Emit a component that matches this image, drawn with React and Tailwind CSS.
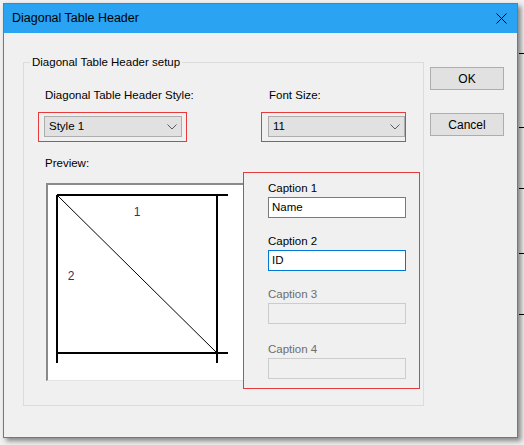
import React from "react";

const font = { fontFamily: '"Liberation Sans", Arial, sans-serif' };

const Chevron = () => (
  <svg width="10" height="6" viewBox="0 0 10 6" className="shrink-0">
    <path d="M0.5 0.5 L5 5 L9.5 0.5" fill="none" stroke="#5a5a5a" strokeWidth="1" />
  </svg>
);

const Combo = ({ value, width }) => (
  <div
    className={`h-[21px] ${width} bg-[#e1e1e1] border border-[#adadad] flex items-center justify-between pl-[4px] pr-[4px] text-[11.5px] text-black`}
  >
    <span>{value}</span>
    <Chevron />
  </div>
);

const Caption = ({ label, value, state, className }) => {
  const box =
    state === "focus"
      ? "bg-white border-[#0078d7]"
      : state === "disabled"
      ? "bg-[#f0f0f0] border-[#cccccc]"
      : "bg-white border-[#7a7a7a]";
  return (
    <div className={className}>
      <div className={`leading-[16px] text-[11.5px] ${state === "disabled" ? "text-[#6d6d6d]" : "text-black"}`}>
        {label}
      </div>
      <div className={`mt-[1px] h-[21px] w-[138px] border ${box} flex items-center pl-[3px] text-[11.5px] text-black`}>
        {value}
      </div>
    </div>
  );
};

const Preview = () => (
  <svg width="200" height="194" viewBox="0 0 200 194" className="block">
    <g stroke="#000" strokeWidth="1.6" shapeRendering="crispEdges">
      <line x1="9" y1="10" x2="180" y2="10" />
      <line x1="9" y1="10" x2="9" y2="178" />
      <line x1="169" y1="10" x2="169" y2="178" />
      <line x1="9" y1="168" x2="180" y2="168" />
    </g>
    <line x1="9" y1="10" x2="169" y2="168" stroke="#000" strokeWidth="1" />
    <text x="89" y="31" fontSize="12" fill="#1f3a6b" textAnchor="middle" style={font}>1</text>
    <text x="23" y="95" fontSize="12" fill="#1f3a6b" textAnchor="middle" style={font}>2</text>
  </svg>
);

const Btn = ({ children, className }) => (
  <button
    className={`w-[74px] h-[23px] bg-[#e1e1e1] border border-[#adadad] text-[12px] text-black flex items-center justify-center ${className || ""}`}
  >
    {children}
  </button>
);

export default function App() {
  const ticks = [53, 127, 188, 253, 314];
  return (
    <div className="relative w-[524px] h-[445px] bg-[#f0f0f0] overflow-hidden" style={font}>
      {ticks.map((t) => (
        <div key={t} className="absolute left-[519px] w-[5px] h-[1px] bg-black" style={{ top: t }} />
      ))}
      <div className="relative ml-[3px] pt-[3px]">
        <div className="w-[515px] h-[435px] border border-[#1c8fe6] bg-[#f0f0f0] shadow-[3px_3px_5px_rgba(0,0,0,0.45)] flex flex-col">
          {/* title bar */}
          <div className="h-[29px] bg-[#29a3f2] flex items-center justify-between pl-[8px] pr-[10px]">
            <span className="text-[12.5px] text-black">Diagonal Table Header</span>
            <svg width="11" height="11" viewBox="0 0 11 11">
              <path d="M0.5 0.5 L10.5 10.5 M10.5 0.5 L0.5 10.5" stroke="#000" strokeWidth="1" />
            </svg>
          </div>

          <div className="flex">
            {/* group box */}
            <div className="relative ml-[19px] mt-[29px] w-[401px] h-[344px] border border-[#dcdcdc]">
              <span className="absolute -top-[9px] left-[6px] bg-[#f0f0f0] px-[2px] text-[11.5px] leading-[16px] text-black">
                Diagonal Table Header setup
              </span>

              <div className="flex pt-[24px] pl-[14px]">
                <div className="w-[149px] shrink-0">
                  <div className="pl-[7px] text-[11.5px] leading-[16px] text-black whitespace-nowrap">Diagonal Table Header Style:</div>
                  <div className="mt-[9px] w-[149px] h-[30px] border border-[#e8393b] pl-[5px] pt-[3px]">
                    <Combo value="Style 1" width="w-[138px]" />
                  </div>
                </div>
                <div className="ml-[74px] w-[145px] shrink-0">
                  <div className="pl-[8px] text-[11.5px] leading-[16px] text-black">Font Size:</div>
                  <div className="mt-[9px] w-[145px] h-[30px] border border-[#e8393b] pl-[6px] pt-[3px]">
                    <Combo value="11" width="w-[137px]" />
                  </div>
                </div>
              </div>

              <div className="flex items-start pl-[21px]">
                <div className="mt-[13px] shrink-0">
                  <div className="text-[11.5px] leading-[16px] text-black">Preview:</div>
                  <div className="ml-[1px] mt-[12px] w-[204px] h-[198px] bg-white border-t-2 border-l-2 border-b border-r border-t-[#8a8a8a] border-l-[#8a8a8a] border-b-[#e3e3e3] border-r-[#e3e3e3]">
                    <Preview />
                  </div>
                </div>
                <div className="relative -ml-[7px] mt-[30px] w-[177px] h-[217px] shrink-0 bg-[#f0f0f0] border border-[#e8393b] pl-[24px] pt-[7px]">
                  <Caption label="Caption 1" value="Name" />
                  <Caption label="Caption 2" value="ID" state="focus" className="mt-[15px]" />
                  <Caption label="Caption 3" value="" state="disabled" className="mt-[15px]" />
                  <Caption label="Caption 4" value="" state="disabled" className="mt-[17px]" />
                </div>
              </div>
            </div>

            {/* buttons */}
            <div className="ml-[6px] mt-[34px] flex flex-col gap-[23px]">
              <Btn>OK</Btn>
              <Btn>Cancel</Btn>
            </div>
          </div>
        </div>
      </div>
    </div>
  );
}
